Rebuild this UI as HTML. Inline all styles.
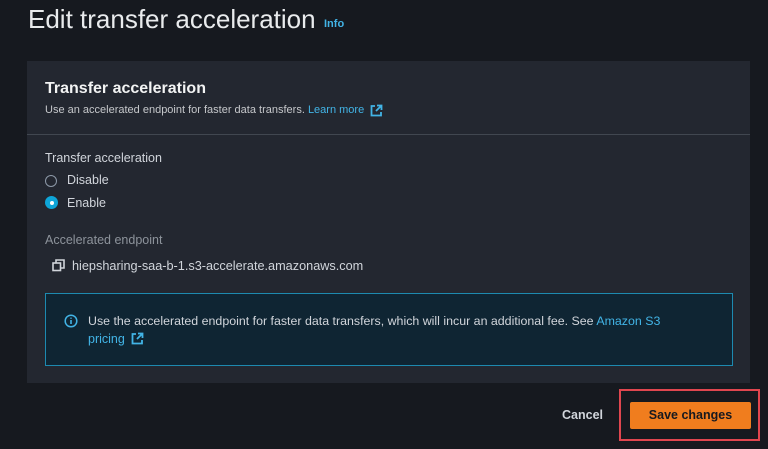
<!DOCTYPE html>
<html><head><style>
body{margin:0;width:768px;height:449px;background:#16191f;font-family:"Liberation Sans",sans-serif;color:#d1d5db;position:relative;overflow:hidden}
.abs{position:absolute;white-space:nowrap}
</style></head><body>
<div class="abs" style="left:28px;top:4px;font-size:26px;color:#e9ebed;">Edit transfer acceleration</div>
<div class="abs" style="left:324px;top:18px;font-size:11px;font-weight:bold;color:#42b4e6;">Info</div>
<div class="abs" style="left:27px;top:61px;width:723px;height:322px;background:#232730;"></div>
<div class="abs" style="left:27px;top:134px;width:723px;height:1px;background:#414750;"></div>
<div class="abs" style="left:45px;top:80px;font-size:16px;font-weight:bold;color:#f2f3f3;">Transfer acceleration</div>
<div class="abs" style="left:45px;top:104px;font-size:11px;color:#c6c8cb;">Use an accelerated endpoint for faster data transfers. <span style="color:#42b4e6">Learn more</span></div>
<svg class="abs" style="left:370px;top:104px" width="13" height="13" viewBox="0 0 13 13"><path d="M7 1.5h4.5V6M11.5 1.5L6 7M5 2H1.5v9.5H11V8" fill="none" stroke="#42b4e6" stroke-width="1.8"/></svg>
<div class="abs" style="left:45px;top:151px;font-size:12.5px;color:#d1d5db;">Transfer acceleration</div>
<div class="abs" style="left:45px;top:175px;width:10px;height:10px;border:1.5px solid #8d99a8;border-radius:50%;"></div>
<div class="abs" style="left:67px;top:173px;font-size:12.5px;color:#d1d5db;">Disable</div>
<div class="abs" style="left:45px;top:196px;width:13px;height:13px;background:#0ea5d8;border-radius:50%;"></div>
<div class="abs" style="left:49.5px;top:200.5px;width:4px;height:4px;background:#fff;border-radius:50%;"></div>
<div class="abs" style="left:67px;top:196px;font-size:12.5px;color:#d1d5db;">Enable</div>
<div class="abs" style="left:45px;top:233px;font-size:12.5px;color:#8d939b;">Accelerated endpoint</div>
<svg class="abs" style="left:52px;top:259px" width="13" height="13" viewBox="0 0 13 13"><rect x="1" y="4" width="7.5" height="7.5" fill="none" stroke="#d1d5db" stroke-width="1.6"/><path d="M4 4V1h8v8H8.5" fill="none" stroke="#d1d5db" stroke-width="1.6"/></svg>
<div class="abs" style="left:72px;top:259px;font-size:12.7px;color:#d1d5db;">hiepsharing-saa-b-1.s3-accelerate.amazonaws.com</div>
<div class="abs" style="left:45px;top:293px;width:686px;height:71px;background:#0f2533;border:1px solid #1d8ab0;"></div>
<svg class="abs" style="left:64px;top:314px" width="14" height="14" viewBox="0 0 14 14"><circle cx="7" cy="7" r="5.8" fill="none" stroke="#42b4e6" stroke-width="1.5"/><path d="M7 6v4M7 3.6v1.2" stroke="#42b4e6" stroke-width="1.6"/></svg>
<div class="abs" style="left:88px;top:314px;font-size:12.4px;color:#d1d5db;">Use the accelerated endpoint for faster data transfers, which will incur an additional fee. See <span style="color:#42b4e6">Amazon S3</span></div>
<div class="abs" style="left:88px;top:332px;font-size:12.5px;color:#42b4e6;">pricing</div>
<svg class="abs" style="left:131px;top:332px" width="13" height="13" viewBox="0 0 13 13"><path d="M7 1.5h4.5V6M11.5 1.5L6 7M5 2H1.5v9.5H11V8" fill="none" stroke="#42b4e6" stroke-width="1.8"/></svg>
<div class="abs" style="left:562px;top:408px;font-size:12.5px;font-weight:bold;color:#d1d5db;">Cancel</div>
<div class="abs" style="left:619px;top:389px;width:137px;height:48px;border:2px solid #e0464f;"></div>
<div class="abs" style="left:630px;top:402px;width:121px;height:27px;background:#f07d1e;border-radius:2px;color:#16191f;font-size:12.5px;font-weight:bold;text-align:center;line-height:27px;">Save changes</div>
</body></html>
